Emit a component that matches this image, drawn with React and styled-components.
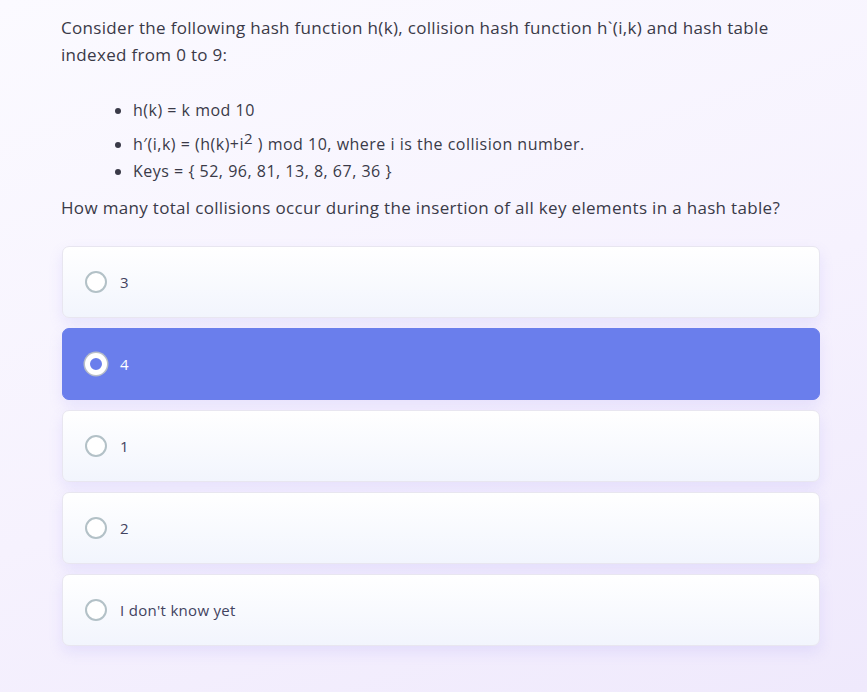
import React from "react";
import styled, { createGlobalStyle } from "styled-components";

const Global = createGlobalStyle`
  html, body { margin: 0; padding: 0; }
  body {
    font-family: "Open Sans", "Noto Sans", sans-serif;
    background: linear-gradient(160deg, #fbfaff 0%, #f6f2fe 55%, #efe9fc 100%);
    min-height: 692px;
    overflow: hidden;
  }
`;

const Page = styled.div`
  width: 867px;
  height: 692px;
  box-sizing: border-box;
  padding: 14px 47px 0 61px;
  color: #3a3a48;
`;

const Para = styled.p`
  margin: 0;
  font-size: 17px;
  letter-spacing: 0.32px;
  line-height: 27px;
  color: #3a3a48;
`;

const List = styled.ul`
  margin: 29px 0 9px;
  padding-left: 72px;
  font-size: 16px;
  letter-spacing: 0.5px;
  line-height: 27px;
  color: #3a3a48;
`;

const Item = styled.li`
  margin-top: ${(p) => p.$mt || 0}px;
`;

const Sup = styled.sup`
  font-size: 15px;
  line-height: 0;
  vertical-align: 6px;
`;

const Options = styled.div`
  display: flex;
  flex-direction: column;
  gap: 10px;
  margin-top: 25px;
  margin-left: 1px;
`;

const Card = styled.label`
  display: flex;
  align-items: center;
  gap: 13px;
  height: 72px;
  box-sizing: border-box;
  padding: 0 23px 0 22px;
  border-radius: 7px;
  border: 1px solid ${(p) => (p.$selected ? "#6a7eec" : "#e8e6f0")};
  background: ${(p) =>
    p.$selected ? "#6a7eec" : "linear-gradient(180deg, #ffffff 0%, #f2f5fd 100%)"};
  box-shadow: 0 6px 14px rgba(150, 135, 240, 0.16);
  cursor: pointer;
`;

const Radio = styled.span`
  width: 22px;
  height: 22px;
  box-sizing: border-box;
  border-radius: 50%;
  flex: none;
  ${(p) =>
    p.$selected
      ? `
    background: #6a7eec;
    border: 5px solid #ffffff;
    box-shadow: 0 0 0 1.5px #b8bec8;
  `
      : `
    background: #ffffff;
    border: 2px solid #b3c1c7;
  `}
`;

const Label = styled.span`
  font-size: 15px;
  letter-spacing: 0.3px;
  color: ${(p) => (p.$selected ? "#ffffff" : "#42435f")};
`;

const options = ["3", "4", "1", "2", "I don't know yet"];

export default function App() {
  return (
    <>
      <Global />
      <Page>
        <Para>
          Consider the following hash function h(k), collision hash function h`(i,k) and hash table
          indexed from 0 to 9:
        </Para>
        <List>
          <Item>h(k) = k mod 10</Item>
          <Item $mt={7}>
            h′(i,k) = (h(k)+i<Sup>2</Sup> ) mod 10, where i is the collision number.
          </Item>
          <Item>Keys = {"{"} 52, 96, 81, 13, 8, 67, 36 {"}"}</Item>
        </List>
        <Para>How many total collisions occur during the insertion of all key elements in a hash table?</Para>
        <Options>
          {options.map((o, i) => (
            <Card key={o} $selected={i === 1}>
              <Radio $selected={i === 1} />
              <Label $selected={i === 1}>{o}</Label>
            </Card>
          ))}
        </Options>
      </Page>
    </>
  );
}
